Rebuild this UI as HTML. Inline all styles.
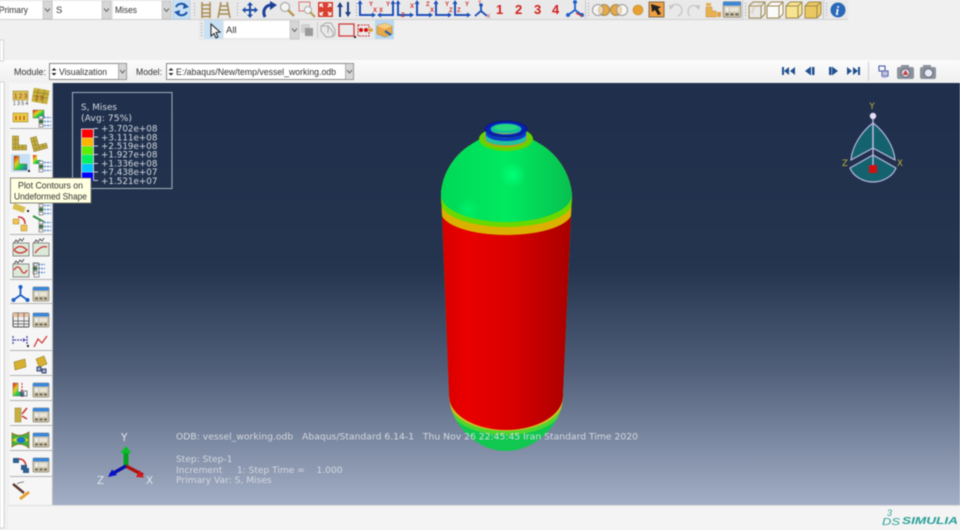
<!DOCTYPE html>
<html><head><meta charset="utf-8"><title>Abaqus Visualization</title>
<style>
html,body{margin:0;padding:0;background:#f0f0f0;width:960px;height:530px;overflow:hidden}
svg{display:block;filter:blur(.5px);font-family:"Liberation Sans",sans-serif}
.d{font-family:"DejaVu Sans",sans-serif;fill:#d5d9e0;font-size:9.1px}
.u{font-size:9px;fill:#333}
</style></head><body>
<svg width="960" height="530" viewBox="0 0 960 530" xmlns="http://www.w3.org/2000/svg">
<defs>
<linearGradient id="vp" x1="0" y1="0" x2="0" y2="1"><stop offset="0" stop-color="#1f2f4c"/><stop offset=".44" stop-color="#25354f"/><stop offset=".68" stop-color="#515f7a"/><stop offset="1" stop-color="#a3afc6"/></linearGradient>
<linearGradient id="mb" x1="0" y1="0" x2="0" y2="1"><stop offset="0" stop-color="#fbfbfb"/><stop offset="1" stop-color="#f0f0f0"/></linearGradient>
<linearGradient id="red" x1="0" y1="0" x2="1" y2="0"><stop offset="0" stop-color="#d40000"/><stop offset=".2" stop-color="#ea0000"/><stop offset=".55" stop-color="#d80000"/><stop offset="1" stop-color="#a80000"/></linearGradient>
<linearGradient id="grn" x1="0" y1="0" x2="1" y2="0"><stop offset="0" stop-color="#00d858"/><stop offset=".5" stop-color="#00ea60"/><stop offset="1" stop-color="#08c050"/></linearGradient>
<radialGradient id="hl"><stop offset="0" stop-color="#00ff78"/><stop offset="1" stop-color="#00ff78" stop-opacity="0"/></radialGradient>
<clipPath id="ves"><path d="M441 195C442 170 458 152 472 144C480 139 490 133 506 130C522 133 532 139 540 144C554 152 570 170 572 195L571 215L563 395C563 425 535 451 506 451C477 451 450 425 449 395L442 215Z"/></clipPath>
<linearGradient id="cont" x1="0" y1="0" x2="1" y2="1"><stop offset="0" stop-color="#e01010"/><stop offset=".35" stop-color="#e8d020"/><stop offset=".6" stop-color="#20d040"/><stop offset="1" stop-color="#2060e0"/></linearGradient>
<g id="win"><rect x="-8" y="-7" width="16" height="14" rx="1" fill="#cfc6ae" stroke="#8a8470" stroke-width=".7"/><rect x="-8" y="-7" width="16" height="3.5" fill="#3a86d8"/><rect x="-6" y="-2" width="3" height="4" fill="#eee"/><rect x="-2" y="-2" width="8" height="4" fill="#e8e4d8"/><rect x="-6" y="3.5" width="3" height="2" fill="#706a58"/><rect x="-1.5" y="3.5" width="3" height="2" fill="#706a58"/><rect x="3" y="3.5" width="3" height="2" fill="#706a58"/></g>
<g id="ax" fill="none" stroke="#1f50b8" stroke-width="2"><path d="M-7 -6V6H7"/><path d="M-9.5 -5L-7 -9L-4.500 -5Z M5 3.500L9 6L5 8.500Z" fill="#1f50b8" stroke="none"/></g>
<g id="grip" fill="#999"><rect x="0" y="-6" width="1" height="1"/><rect x="0" y="-3" width="1" height="1"/><rect x="0" y="0" width="1" height="1"/><rect x="0" y="3" width="1" height="1"/><rect x="0" y="6" width="1" height="1"/></g>
<g id="arr"><rect x="0" y="0" width="9" height="18" fill="#d6d6d6" stroke="#b0b0b0" stroke-width=".5"/><path d="M2 7.500L4.500 10.500L7 7.500" fill="none" stroke="#666" stroke-width="1"/></g>
<g id="arr2"><rect x="0" y="0" width="8" height="16" fill="#d6d6d6" stroke="#8a8a8a" stroke-width=".6"/><path d="M1.500 6.500L4 9.500L6.500 6.500" fill="none" stroke="#666" stroke-width="1"/></g>
<g id="bk"><rect x="-8" y="-7" width="16" height="14" fill="#c8b040"/><g stroke="#8a7a20" stroke-width=".6"><path d="M-8 -3H8M-8 1H8M-3 -7V7M3 -7V7"/></g></g>
<g id="ll"><path d="M-7 -7H-1V2H7V7H-7Z" fill="#c8b040" stroke="#8a7a30" stroke-width=".6"/><path d="M-7 -3H-1M-7 1H-1M-7 4.500H7M-4 -7V7M-1 2V7M3 2V7" stroke="#8a7a30" stroke-width=".5" fill="none"/></g>
<g id="tri"><path d="M0 -7V1L-7 6M0 1L7 6" fill="none" stroke="#1f60c8" stroke-width="1.800"/><circle cy="-7" r="2" fill="#1f60c8"/><circle cx="-7" cy="6" r="2" fill="#1f60c8"/><circle cx="7" cy="6" r="2" fill="#1f60c8"/></g>
<g id="cube"><path d="M-8 -4L-4 -8H8V4L4 8H-8ZM-8 -4H4V8M4 -4L8 -8" stroke="#a08850" stroke-width="1" stroke-linejoin="round"/></g>
<g id="lst"><rect x="-2" y="-3" width="4" height="3" fill="#eee" stroke="#666" stroke-width=".6"/><rect x="-2" y="1" width="4" height="3" fill="#2a7a3a" stroke="#666" stroke-width=".6"/><rect x="-2" y="5" width="4" height="3" fill="#eee" stroke="#666" stroke-width=".6"/><path d="M3 -1.500H10M3 2.500H10M3 6.500H10" stroke="#3a80d8" stroke-width="1.200" stroke-dasharray="2 1"/></g>
</defs>

<!-- backgrounds -->
<rect width="960" height="530" fill="#f0f0f0"/>
<rect width="848" height="20" fill="#e9e9e9"/>
<rect y="19" width="848" height="1" fill="#d0d0d0"/>
<rect x="199" y="20" width="195" height="20" fill="#e9e9e9"/>
<rect x="0" y="60" width="960" height="23" fill="url(#mb)"/>
<rect x="0" y="40" width="3.500" height="21" fill="#fff" stroke="#bbb" stroke-width=".6"/>
<rect x="0" y="82" width="4" height="446" fill="#fff" stroke="#bbb" stroke-width=".6"/>
<rect x="9" y="83" width="44" height="422" fill="#f6f6f6"/>
<rect x="53" y="83" width="907" height="422" fill="url(#vp)"/>
<rect x="52" y="83" width="1" height="422" fill="#bdbdbd"/>
<rect x="8" y="505" width="952" height="25" fill="#f4f4f4"/>
<rect x="8" y="505" width="952" height="1" fill="#ddd"/>

<!-- combos row 1 -->
<rect x="0" y="1" width="43" height="18" fill="#fff"/><use href="#arr" x="43" y="1"/>
<rect x="53" y="1" width="49" height="18" fill="#fff"/><use href="#arr" x="102" y="1"/>
<rect x="113" y="1" width="49" height="18" fill="#fff"/><use href="#arr" x="162" y="1"/>
<g font-size="9.500" fill="#333"><text x="-1" y="13" textLength="29" lengthAdjust="spacingAndGlyphs">Primary</text><text x="56" y="13">S</text><text x="115" y="13" textLength="22" lengthAdjust="spacingAndGlyphs">Mises</text></g>
<rect x="173" y="0" width="17" height="19" fill="#c8e0f4" stroke="#a8c8e4" stroke-width=".6"/>
<path d="M176 7A6 6 0 0 1 186 6M187 12A6 6 0 0 1 177 13" fill="none" stroke="#1d55a8" stroke-width="2"/>
<path d="M184 3L189 7L183 9ZM179 16L174 12L180 10Z" fill="#1d55a8"/>
<use href="#grip" x="194" y="9"/>
<g stroke="#a88a50" stroke-width="1.500" fill="none"><path d="M202 2V18M210 2V18M202 5H210M202 9H210M202 13H210M202 16.500H210"/><path d="M221 2L218 18M227 2L230 18M220 6H228M219 10H229M218.500 14H229.500"/></g>
<use href="#grip" x="237" y="9"/>
<path d="M250 2L253 5.500H251V9H254.500V7L258 10L254.500 13V11H251V14.500H253L250 18L247 14.500H249V11H245.500V13L242 10L245.500 7V9H249V5.500H247Z" fill="#1f4fa8"/>
<path d="M265 17C262 11 265 5 272 5" fill="none" stroke="#1f3f98" stroke-width="3"/><path d="M270 1L277 5L270 10Z" fill="#1f3f98"/>
<circle cx="285" cy="7" r="4.500" fill="#f4f4f4" stroke="#aaa" stroke-width="1.200"/><path d="M288 10L294 16" stroke="#b89850" stroke-width="2.500"/>
<rect x="299" y="2" width="11" height="9" fill="none" stroke="#e07070" stroke-width="1"/><circle cx="308" cy="10" r="3.500" fill="#f4f4f4" stroke="#aaa"/><path d="M310 12L315 17" stroke="#b89850" stroke-width="2"/>
<rect x="318" y="2" width="15" height="15" fill="#d84030"/><path d="M320 4L323 7M331 4L328 7M320 15L323 12M331 15L328 12" stroke="#fff" stroke-width="1.500"/><path d="M320 4h3M320 4v3M331 4h-3M331 4v3M320 15h3M320 15v-3M331 15h-3M331 15v-3" stroke="#fff" stroke-width="1"/>
<path d="M340 17V5M348 2V14" stroke="#1f3f88" stroke-width="2"/><path d="M337 7L340 2L343 7ZM345 12L348 17L351 12Z" fill="#1f3f88"/>
<use href="#grip" x="356" y="9"/>
<g font-size="6" font-weight="bold" fill="#d03030">
<use href="#ax" x="367" y="9"/><text x="369" y="6">Y</text><text x="373" y="12">X</text>
<use href="#ax" x="386" y="9" transform="translate(772 0) scale(-1 1)"/><text x="386" y="6">Y</text><text x="379" y="12">X</text>
<use href="#ax" x="405" y="9"/><text x="401" y="17">Z</text><text x="410" y="8">X</text>
<use href="#ax" x="424" y="9"/><text x="426" y="6">Z</text><text x="430" y="12">X</text>
<use href="#ax" x="443" y="9"/><text x="445" y="6">Y</text><text x="449" y="12">Z</text>
<use href="#ax" x="462" y="9"/><text x="465" y="6">Y</text><text x="457" y="12">Z</text>
</g>
<path d="M481 4V11L475 16M481 11L487 16" fill="none" stroke="#1f50b8" stroke-width="1.800"/><circle cx="481" cy="5" r="1.800" fill="#1f50b8"/><text x="478" y="4" font-size="5" fill="#d03030">Y</text><text x="487" y="18" font-size="5" fill="#d03030">X</text>
<g font-size="13" font-weight="bold" fill="#d4201c"><text x="496" y="14">1</text><text x="515" y="14">2</text><text x="534" y="14">3</text><text x="552" y="14">4</text></g>
<use href="#tri" x="575" y="9"/><path d="M576 13L582 16" stroke="#d03030" stroke-width="1.500"/>
<rect x="585" y="0" width="1" height="19" fill="#c8c8c8"/>
<use href="#grip" x="588" y="9"/>
<circle cx="604" cy="10" r="5.500" fill="#e8a848" stroke="#a08850"/><circle cx="598" cy="10" r="5.500" fill="#fff" fill-opacity=".5" stroke="#999"/>
<circle cx="616" cy="10" r="5.500" fill="#e8a848" stroke="#a08850"/><circle cx="622" cy="10" r="5.500" fill="#fff" fill-opacity=".55" stroke="#999"/>
<circle cx="638" cy="10" r="5" fill="#e8a030" stroke="#b88838" stroke-width=".6"/>
<rect x="649" y="2" width="15" height="15" fill="#f0a040" stroke="#807050"/><path d="M651 4L661 7L658 9L661 14L658 15L655 10L652 12Z" fill="#222"/>
<path d="M671 7A6 6 0 1 1 678 16" fill="none" stroke="#c4c4c4" stroke-width="1.200"/><path d="M669 5L674 6L670 10Z" fill="#c4c4c4"/>
<path d="M698 7A6 6 0 1 0 690 16" fill="none" stroke="#c4c4c4" stroke-width="1.200"/><path d="M700 5L695 6L699 10Z" fill="#c4c4c4"/>
<rect x="706" y="3" width="5" height="3" fill="#e8b050"/><path d="M706 7H712V11H716V17H706Z" fill="#e8b050" stroke="#b88838" stroke-width=".5"/><rect x="717" y="12" width="4" height="5" fill="#e0a040"/>
<g transform="translate(732 9.500)"><use href="#win" transform="scale(1.100)"/></g>
<rect x="742" y="0" width="1" height="19" fill="#c8c8c8"/>
<use href="#grip" x="745" y="9"/>
<use href="#cube" x="757" y="10" fill="none"/><path d="M749 14L761 2M753 6V14M749 6H761" stroke="#c0a878" stroke-width=".4" fill="none"/>
<use href="#cube" x="775" y="10" fill="#fafafa"/>
<use href="#cube" x="794" y="10" fill="#f6e490"/>
<use href="#cube" x="813" y="10" fill="#eac860"/>
<rect x="823" y="0" width="1" height="19" fill="#c8c8c8"/>
<use href="#grip" x="826" y="9"/>
<circle cx="838" cy="10" r="7.500" fill="#2a68b8"/><text x="835.500" y="15" font-size="13" font-weight="bold" font-style="italic" font-family="Liberation Serif, serif" fill="#fff">i</text>

<!-- row 2 -->
<use href="#grip" x="201" y="29"/>
<rect x="204" y="20" width="19" height="19" fill="#c8e0f4"/>
<path d="M211 24V36L214 33.500L216 38L218 37L216 32.500L220 32Z" fill="#f4f4f4" stroke="#222" stroke-width="1"/>
<rect x="224" y="21" width="67" height="17" fill="#fff"/><use href="#arr" x="290" y="21"/>
<text x="226" y="33" font-size="9.500" fill="#333">All</text>
<rect x="301" y="24" width="9" height="9" fill="#d0d0d0"/><rect x="305" y="28" width="8" height="8" fill="#9a9a9a"/>
<rect x="317" y="22" width="1" height="16" fill="#ccc"/>
<g fill="none" stroke="#aaa" stroke-width="1"><path d="M321 26L326 23H331L335 30V35L331 37H326L321 31Z"/><path d="M321 26H328L333 32V37M328 26V33"/></g>
<rect x="339" y="24" width="15" height="12" fill="none" stroke="#d03030" stroke-width="1.200"/><rect x="354" y="36" width="2" height="2" fill="#222"/>
<rect x="358" y="25" width="11" height="11" fill="none" stroke="#d03030" stroke-width="1" stroke-dasharray="2 1"/><circle cx="361" cy="30" r="2" fill="#d01010"/><circle cx="366" cy="30" r="2" fill="#d01010"/><circle cx="371" cy="30" r="2" fill="#e0a840"/>
<rect x="375" y="20" width="19" height="19" fill="#b8d8f0"/>
<path d="M377 26L385 23L392 26V34L385 37L377 34Z" fill="#e8a848" stroke="#a87830" stroke-width=".5"/><path d="M377 26L385 29L392 26L385 23Z" fill="#f4cc80"/><path d="M385 31L391 35" stroke="#1f60a8" stroke-width="2"/>

<!-- module bar -->
<g fill="#fff"><rect x="50" y="64" width="68" height="15"/><rect x="167" y="64" width="178" height="15"/></g>
<g fill="none" stroke="#8a8a8a"><rect x="49.500" y="63.500" width="77" height="16"/><rect x="166.500" y="63.500" width="187" height="16"/></g>
<g fill="#222"><path d="M54 68L51.500 70.500H56.500ZM54 75.500L51.500 73H56.500Z M171 68L168.500 70.500H173.500ZM171 75.500L168.500 73H173.500Z"/></g>
<use href="#arr2" x="118.500" y="63.500"/><use href="#arr2" x="345.500" y="63.500"/>
<g font-size="9.500" fill="#333"><text x="14" y="75" textLength="32" lengthAdjust="spacingAndGlyphs">Module:</text><text x="136" y="75" textLength="26" lengthAdjust="spacingAndGlyphs">Model:</text><text x="59" y="75" textLength="48" lengthAdjust="spacingAndGlyphs">Visualization</text><text x="176" y="75" textLength="160" lengthAdjust="spacingAndGlyphs">E:/abaqus/New/temp/vessel_working.odb</text></g>
<g fill="#1f5090"><path d="M782 67h2v8h-2ZM789 67V75L784 71ZM795 67V75L790 71Z"/><path d="M805 71L811 66.500V75.500ZM812 67h2.500v8H812Z"/><path d="M829 67h2.500v8H829ZM832 66.500L838 71L832 75.500Z"/><path d="M847 67L852 71L847 75ZM853 67L858 71L853 75ZM858 67h2v8h-2Z"/></g>
<rect x="868" y="62" width="1" height="19" fill="#ccc"/>
<g fill="none" stroke="#4a5aa8" stroke-width="1.100"><rect x="879" y="66" width="6" height="5"/><rect x="882" y="71" width="6" height="5"/></g><rect x="882" y="71" width="5" height="7" fill="#9aa0c8" fill-opacity=".6"/>
<rect x="897" y="67" width="17" height="12" rx="2" fill="#8c929c"/><rect x="901" y="65" width="8" height="3" fill="#8c929c"/><circle cx="905.500" cy="73" r="4.300" fill="#d8e0ec" stroke="#667"/><path d="M905.500 70L908.500 75H902.500Z" fill="#c84040"/>
<rect x="920" y="67" width="16" height="12" rx="2" fill="#8c929c"/><rect x="923" y="65" width="8" height="3" fill="#8c929c"/><circle cx="928.500" cy="73" r="4.300" fill="#e4ecf6" stroke="#667"/>

<!-- toolbox -->
<g fill="#b4b4b4"><rect x="10" y="128" width="42" height="1"/><rect x="10" y="234" width="42" height="1"/><rect x="10" y="279" width="42" height="1"/><rect x="10" y="303" width="42" height="1"/><rect x="10" y="350" width="42" height="1"/><rect x="10" y="375" width="42" height="1"/><rect x="10" y="400" width="42" height="1"/><rect x="10" y="425" width="42" height="1"/><rect x="10" y="450" width="42" height="1"/><rect x="10" y="476" width="42" height="1"/></g>
<g><rect x="13" y="91" width="15" height="9" fill="#d8c050" stroke="#8a7a30" stroke-width=".5"/><text x="14" y="98" font-size="6" fill="#a03020">1 2 3</text><text x="13" y="105" font-size="5" fill="#333">1 3 5 4</text>
<g transform="translate(40.500 96) rotate(10)"><use href="#bk"/></g><text x="35" y="100" font-size="6" fill="#a03020">2 3</text>
<rect x="13" y="113" width="15" height="9" fill="#e8c840" stroke="#8a7a30" stroke-width=".5"/><path d="M16 116v4M20 116v4M24 116v4" stroke="#c03020"/>
<rect x="33" y="110" width="11" height="8" fill="url(#cont)" stroke="#555" stroke-width=".4"/><use href="#lst" x="41" y="119"/>
<use href="#ll" x="19.500" y="143"/><g transform="translate(39 143) rotate(-15)"><use href="#ll"/></g>
<rect x="11" y="154" width="19" height="18" fill="#c8e0f4"/><path d="M14 156H19V164H27V170H14Z" fill="url(#cont)" stroke="#6a6a40" stroke-width=".5"/><rect x="28" y="170" width="2" height="2" fill="#222"/>
<path d="M33 155H37V160H41V164H33Z" fill="url(#cont)"/><use href="#lst" x="41" y="164"/>
<rect x="13" y="205" width="12" height="6" fill="#d8c050" transform="rotate(20 19 208)"/><rect x="27" y="210" width="2" height="2" fill="#222"/><use href="#lst" x="41" y="207"/>
<path d="M13 219h6v5h-6zM21 225h6v6h-6z" fill="#f0c050" stroke="#a88830" stroke-width=".5"/><path d="M18 217Q25 217 25 224" fill="none" stroke="#d03030" stroke-width="1.500"/>
<path d="M33 216L44 222" stroke="#309040" stroke-width="2"/><use href="#lst" x="41" y="224"/>
<g id="cp"><rect x="13" y="243" width="16" height="13" fill="#dce8d8" stroke="#666" stroke-width=".7"/><path d="M14 243l2-3l2 2l2-3l2 2l2-3" fill="none" stroke="#555" stroke-width="1"/></g>
<path d="M14 250Q20 243 27 250Q20 256 14 250" fill="none" stroke="#d03030" stroke-width="1.300"/>
<use href="#cp" x="20"/><path d="M35 253Q41 245 47 247" fill="none" stroke="#d03030" stroke-width="1.300"/>
<use href="#cp" y="21"/><path d="M14 270Q18 264 21 270T27 270" fill="none" stroke="#d03030" stroke-width="1.300"/>
<use href="#lst" x="35" y="266"/><rect x="34" y="263" width="5" height="14" fill="none" stroke="#555" stroke-width=".6"/>
<use href="#tri" x="20.500" y="294"/><use href="#win" x="41" y="294"/>
<rect x="13" y="313" width="16" height="14" rx="1" fill="#f0f0f0" stroke="#555"/><rect x="13" y="313" width="16" height="4" fill="#e8c0a0"/><path d="M13 321H29M13 324H29M18 313V327M24 313V327" stroke="#555" stroke-width=".7"/>
<use href="#win" x="41" y="320"/>
<path d="M13 336V344M27 336V344M14 340H26" stroke="#4848a8" stroke-width="1.300" stroke-dasharray="2 1"/><path d="M26 340l-3-2v4z" fill="#4848a8"/><rect x="27" y="345" width="2" height="2" fill="#222"/>
<path d="M34 347L38 339L42 343L47 336" fill="none" stroke="#d03030" stroke-width="1.200"/>
<path d="M14 362L25 359L26 367L15 370Z" fill="#d8b030" stroke="#80701f" stroke-width=".5"/>
<path d="M36 359L44 356L47 364L39 367Z" fill="#d8b030" stroke="#80701f" stroke-width=".5"/><rect x="37" y="367" width="4" height="4" fill="#90b0e0" stroke="#446"/><rect x="42" y="369" width="4" height="4" fill="#90b0e0" stroke="#446"/>
<path d="M13 383H18V392H24V396H13Z" fill="url(#cont)" stroke="#556" stroke-width=".4"/><path d="M22 383V398" stroke="#d03030" stroke-dasharray="2 1"/><rect x="21" y="391" width="6" height="5" fill="none" stroke="#333" stroke-width=".6"/>
<use href="#win" x="41" y="390"/>
<rect x="15" y="408" width="6" height="14" fill="#c8b040" stroke="#8a7a30" stroke-width=".5"/><path d="M22 414L27 408M22 416L27 419" stroke="#d03030" stroke-width="1.500"/>
<use href="#win" x="41" y="415"/>
<path d="M12 433Q20 438 29 432V448Q20 441 12 447Z" fill="#40b040" stroke="#9a7020" stroke-width=".8"/><path d="M12 440Q20 434 29 440Q20 445 12 440" fill="#d8d820"/><ellipse cx="21" cy="440" rx="4.500" ry="3" fill="#1878c8"/>
<use href="#win" x="41" y="440"/>
<rect x="13" y="458" width="6" height="5" fill="#2f5f8f"/><path d="M19 459Q25 459 26 466" fill="none" stroke="#d03030" stroke-width="1.500"/><rect x="21" y="465" width="6" height="5" fill="#2f5f8f"/><rect x="23" y="468" width="6" height="5" fill="#2f5f8f"/>
<use href="#win" x="41" y="465"/>
<path d="M13 484L24 493" stroke="#5a3a30" stroke-width="2.500"/><path d="M20 499L29 492" stroke="#e8a030" stroke-width="3"/><path d="M17 484Q20 482 24 482" stroke="#888" fill="none"/>
</g>

<!-- legend -->
<rect x="72.500" y="92.500" width="99.500" height="96" fill="none" stroke="#a4afbd" stroke-width="1"/>
<text class="d" x="81" y="110" textLength="36" lengthAdjust="spacingAndGlyphs">S, Mises</text>
<text class="d" x="81" y="121" textLength="51" lengthAdjust="spacingAndGlyphs">(Avg: 75%)</text>
<rect x="81" y="128.500" width="13" height="52" fill="#ccd"/>
<rect x="82" y="129.500" width="11" height="8" fill="#ff0000"/>
<rect x="82" y="138" width="11" height="8" fill="#ffb400"/>
<rect x="82" y="146.500" width="11" height="8" fill="#5cf000"/>
<rect x="82" y="155" width="11" height="8.500" fill="#00f060"/>
<rect x="82" y="164" width="11" height="8" fill="#00c8ff"/>
<rect x="82" y="172.500" width="11" height="8" fill="#0000ff"/>
<g stroke="#ccd" stroke-width="1"><path d="M94 128.500h4M94 137h4M94 146h4M94 154.500h4M94 163.500h4M94 172h4M94 180.500h4"/></g>
<g><text class="d" x="101" y="131.500" textLength="56.500" lengthAdjust="spacingAndGlyphs">+3.702e+08</text><text class="d" x="101" y="140.500" textLength="56.500" lengthAdjust="spacingAndGlyphs">+3.111e+08</text><text class="d" x="101" y="149" textLength="56.500" lengthAdjust="spacingAndGlyphs">+2.519e+08</text><text class="d" x="101" y="157.500" textLength="56.500" lengthAdjust="spacingAndGlyphs">+1.927e+08</text><text class="d" x="101" y="166.500" textLength="56.500" lengthAdjust="spacingAndGlyphs">+1.336e+08</text><text class="d" x="101" y="175" textLength="56.500" lengthAdjust="spacingAndGlyphs">+7.438e+07</text><text class="d" x="101" y="184" textLength="56.500" lengthAdjust="spacingAndGlyphs">+1.521e+07</text></g>

<!-- tooltip -->
<rect x="10.500" y="178" width="80.500" height="25" fill="#ffffe1" stroke="#6f6f60" stroke-width=".8"/>
<text class="u" x="18" y="188.500" textLength="65" lengthAdjust="spacingAndGlyphs">Plot Contours on</text>
<text class="u" x="14" y="199.500" textLength="73" lengthAdjust="spacingAndGlyphs">Undeformed Shape</text>

<!-- vessel -->
<g clip-path="url(#ves)">
<rect x="430" y="120" width="150" height="340" fill="#10c850"/>
<path d="M449 406A57 29 0 0 0 563 406V300H449Z" fill="#50d430"/>
<path d="M449 401A57 30 0 0 0 563 401V300H449Z" fill="#d8bc20"/>
<path d="M449 396A57 34 0 0 0 563 396L572 200H440Z" fill="url(#red)"/>
<path d="M441 212A65.500 23 0 0 0 572 212V100H441Z" fill="#dcb000"/>
<path d="M441 203A65.500 24 0 0 0 572 203V100H441Z" fill="#68d800"/>
<path d="M441 195A65.500 27 0 0 0 572 195V100H441Z" fill="url(#grn)"/>
<circle cx="513" cy="175" r="13" fill="url(#hl)"/>
<circle cx="468" cy="209" r="12" fill="url(#hl)" opacity=".5"/>
</g>
<ellipse cx="506" cy="139" rx="27" ry="12" fill="#62d400"/>
<ellipse cx="506" cy="138" rx="22" ry="9.500" fill="#c89a10"/>
<path d="M485.500 128V138C486 143 526 143 526.500 138V128Z" fill="#20a8e0"/>
<ellipse cx="506" cy="139" rx="20.500" ry="6.500" fill="#20c0a0"/>
<ellipse cx="506" cy="129" rx="21" ry="8" fill="#0a1fb8" stroke="#071a70" stroke-width="1"/>
<path d="M486 131V135C490 143 522 143 526 135V131C520 140 492 140 486 131Z" fill="#0d38c8"/>
<ellipse cx="506" cy="129" rx="15.500" ry="5.500" fill="#12c09a"/>
<path d="M491 131C495 135 517 135 521 131C519 134 493 134 491 131Z" fill="#c89a30"/>
<ellipse cx="506" cy="127.500" rx="12" ry="3" fill="#28d880"/>

<!-- bottom text -->
<text class="d" x="176" y="439.500" xml:space="preserve" textLength="462" lengthAdjust="spacingAndGlyphs">ODB: vessel_working.odb   Abaqus/Standard 6.14-1   Thu Nov 26 22:45:45 Iran Standard Time 2020</text>
<text class="d" x="176" y="462">Step: Step-1</text>
<text class="d" x="176" y="473" xml:space="preserve">Increment     1: Step Time =    1.000</text>
<text class="d" x="176" y="483">Primary Var: S, Mises</text>

<!-- triad -->
<path d="M126 466V452" stroke="#08a020" stroke-width="5"/><path d="M120.500 453L126 446L131.500 453Z" fill="#08c028"/>
<path d="M126 466L143 475" stroke="#b01010" stroke-width="3.500"/><path d="M136 477L144 477.500L139.500 470Z" fill="#d01818"/>
<path d="M126 466L110 475" stroke="#0a10a8" stroke-width="3.500"/><path d="M108 477L112 469.500L117 475Z" fill="#0a10c8"/>
<g font-family="DejaVu Sans, sans-serif" font-size="10.500" fill="#e0e4ea"><text x="121" y="441">Y</text><text x="146" y="484">X</text><text x="97" y="484">Z</text></g>

<!-- view cube gizmo -->
<path d="M873 123C861 132 852 147 851 160L873 148Z" fill="#14626e" stroke="#b8b8e0" stroke-width="1.200"/>
<path d="M873 123C885 132 894 147 895 160L873 148Z" fill="#14626e" stroke="#b8b8e0" stroke-width="1.200"/>
<path d="M873 155L850 168C853 176 863 182 873 182C883 182 893 176 896 168Z" fill="#14626e" stroke="#b8b8e0" stroke-width="1.200"/>
<path d="M873 119V165" stroke="#b8b8e0" stroke-width="1.400"/>
<circle cx="873" cy="116" r="3.200" fill="#e4dcf4"/>
<rect x="869" y="165" width="8" height="8" fill="#d01010"/>
<g font-family="DejaVu Sans, sans-serif" font-size="8.500" fill="#c0b040"><text x="869.500" y="109">Y</text><text x="842" y="166">Z</text><text x="897" y="166">X</text></g>

<!-- simulia -->
<g fill="#2aa098" font-style="italic"><text x="887" y="516" font-size="9">3</text><text x="882" y="525" font-size="10" textLength="18" lengthAdjust="spacingAndGlyphs">DS</text></g>
<text x="902" y="524" font-size="10.500" font-weight="bold" font-style="italic" fill="#2aa098" textLength="56" lengthAdjust="spacingAndGlyphs">SIMULIA</text>
</svg>
</body></html>
